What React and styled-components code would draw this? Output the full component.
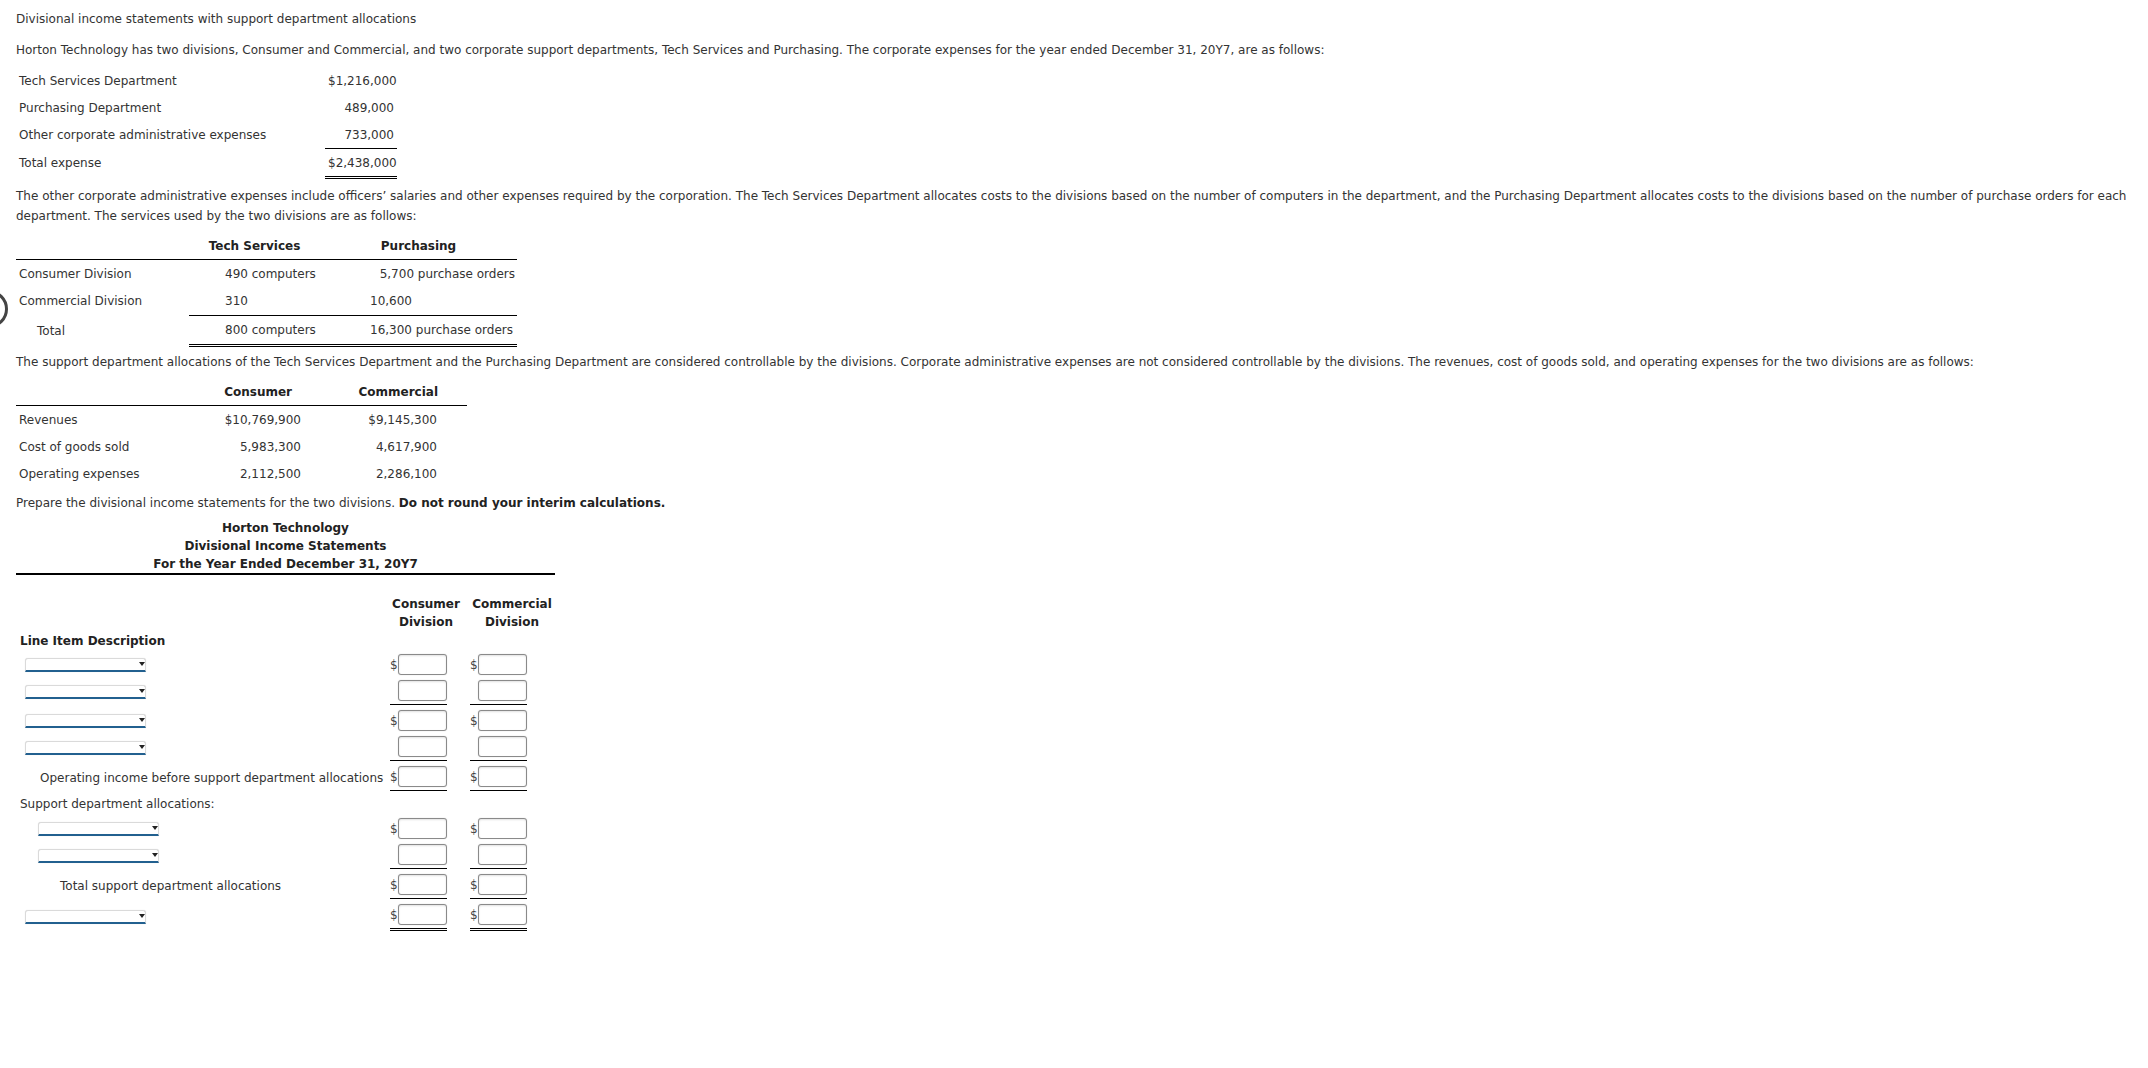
import styled, { createGlobalStyle } from "styled-components";

const GlobalStyle = createGlobalStyle`
  html, body {
    margin: 0;
    padding: 0;
    background: #fff;
  }
  body {
    font-family: "DejaVu Sans", Verdana, sans-serif;
    font-size: 12px;
    color: #333;
  }
`;

const expenses = [
  { label: "Tech Services Department", amount: "$1,216,000" },
  { label: "Purchasing Department", amount: "489,000" },
  { label: "Other corporate administrative expenses", amount: "733,000", rule: "single" },
  { label: "Total expense", amount: "$2,438,000", rule: "double" },
];

const divisions = [
  { label: "Revenues", consumer: "$10,769,900", commercial: "$9,145,300" },
  { label: "Cost of goods sold", consumer: "5,983,300", commercial: "4,617,900" },
  { label: "Operating expenses", consumer: "2,112,500", commercial: "2,286,100" },
];

const answerRows = [
  { kind: "select", level: 0, dollar: true },
  { kind: "select", level: 0, line: "single" },
  { kind: "select", level: 0, dollar: true },
  { kind: "select", level: 0, line: "single" },
  { kind: "text", level: 1, dollar: true, line: "single", text: "Operating income before support department allocations" },
  { kind: "heading", text: "Support department allocations:" },
  { kind: "select", level: 1, dollar: true },
  { kind: "select", level: 1, line: "single" },
  { kind: "text", level: 2, dollar: true, line: "single", text: "Total support department allocations" },
  { kind: "select", level: 0, dollar: true, line: "double" },
];

const ruleStyle = (rule) =>
  rule === "single" ? "1px solid #000" : rule === "double" ? "3px double #000" : "none";

export default function App() {
  return (
    <>
      <GlobalStyle />
      <Page>
        <EdgeCircle />
        <Text>Divisional income statements with support department allocations</Text>
        <Text $mt={11}>
          Horton Technology has two divisions, Consumer and Commercial, and two corporate support
          departments, Tech Services and Purchasing. The corporate expenses for the year ended
          December 31, 20Y7, are as follows:
        </Text>

        <Table $mt={7} $w={381}>
          <colgroup>
            <Col $w={309} />
            <Col $w={72} />
          </colgroup>
          <tbody>
            {expenses.map((row) => (
              <tr key={row.label}>
                <Cell>{row.label}</Cell>
                <Cell $align="right" $rule={row.rule}>
                  {row.amount}
                </Cell>
              </tr>
            ))}
          </tbody>
        </Table>

        <Text $mt={7}>
          The other corporate administrative expenses include officers’ salaries and other expenses
          required by the corporation. The Tech Services Department allocates costs to the divisions
          based on the number of computers in the department, and the Purchasing Department allocates
          costs to the divisions based on the number of purchase orders for each department. The
          services used by the two divisions are as follows:
        </Text>

        <Table $mt={6} $w={501}>
          <colgroup>
            <Col $w={173} />
            <Col $w={131} />
            <Col $w={197} />
          </colgroup>
          <thead>
            <tr>
              <HeadCell $rule="single" />
              <HeadCell $rule="single" $align="center">Tech Services</HeadCell>
              <HeadCell $rule="single" $align="center">Purchasing</HeadCell>
            </tr>
          </thead>
          <tbody>
            <tr>
              <Cell>Consumer Division</Cell>
              <Cell $pl={36}>490 computers</Cell>
              <Cell $align="right" $pr={2}>5,700 purchase orders</Cell>
            </tr>
            <tr>
              <Cell $h={28}>Commercial Division</Cell>
              <Cell $h={28} $pl={36} $rule="single">310</Cell>
              <Cell $h={28} $pl={50} $rule="single">10,600</Cell>
            </tr>
            <tr>
              <Cell $h={28} $pl={21}>Total</Cell>
              <Cell $h={28} $pl={36} $rule="double">800 computers</Cell>
              <Cell $h={28} $pl={50} $rule="double">16,300 purchase orders</Cell>
            </tr>
          </tbody>
        </Table>

        <Text $mt={5}>
          The support department allocations of the Tech Services Department and the Purchasing
          Department are considered controllable by the divisions. Corporate administrative expenses
          are not considered controllable by the divisions. The revenues, cost of goods sold, and
          operating expenses for the two divisions are as follows:
        </Text>

        <Table $mt={6} $w={451}>
          <colgroup>
            <Col $w={197} />
            <Col $w={90} />
            <Col $w={164} />
          </colgroup>
          <thead>
            <tr>
              <HeadCell $rule="single" />
              <HeadCell $rule="single" $align="right" $pr={11}>Consumer</HeadCell>
              <HeadCell $rule="single" $align="right" $pr={29}>Commercial</HeadCell>
            </tr>
          </thead>
          <tbody>
            {divisions.map((row) => (
              <tr key={row.label}>
                <Cell>{row.label}</Cell>
                <Cell $align="right" $pr={2}>{row.consumer}</Cell>
                <Cell $align="right" $pr={30}>{row.commercial}</Cell>
              </tr>
            ))}
          </tbody>
        </Table>

        <Text $mt={6}>
          Prepare the divisional income statements for the two divisions.{" "}
          <Strong>Do not round your interim calculations.</Strong>
        </Text>

        <StatementTitle>
          <div>Horton Technology</div>
          <div>Divisional Income Statements</div>
          <div>For the Year Ended December 31, 20Y7</div>
        </StatementTitle>

        <AnswerHead>
          <span />
          <ColumnTitle $shift={-2}>
            Consumer
            <br />
            Division
          </ColumnTitle>
          <ColumnTitle $shift={4}>
            Commercial
            <br />
            Division
          </ColumnTitle>
        </AnswerHead>
        <LineItemTitle>Line Item Description</LineItemTitle>

        <AnswerBody>
          {answerRows.map((row, i) =>
            row.kind === "heading" ? (
              <SectionLabel key={i}>{row.text}</SectionLabel>
            ) : (
              <AnswerRow key={i} $line={row.line}>
                {row.kind === "select" ? (
                  <SelectWrap $level={row.level}>
                    <Dropdown defaultValue="">
                      <option value="" />
                    </Dropdown>
                  </SelectWrap>
                ) : (
                  <RowLabel $level={row.level}>{row.text}</RowLabel>
                )}
                {[0, 1].map((c) => (
                  <AmountCell key={c} $line={row.line}>
                    <Dollar>{row.dollar ? "$" : ""}</Dollar>
                    <AmountInput type="text" />
                  </AmountCell>
                ))}
              </AnswerRow>
            )
          )}
        </AnswerBody>
      </Page>
    </>
  );
}

const Page = styled.main`
  position: relative;
  box-sizing: border-box;
  min-height: 1068px;
  padding: 9px 16px 40px;
`;

const EdgeCircle = styled.div`
  position: absolute;
  left: -30px;
  top: 290px;
  width: 32px;
  height: 32px;
  border: 3px solid #444;
  border-radius: 50%;
`;

const Text = styled.p`
  margin: ${(p) => p.$mt ?? 0}px 0 0;
  line-height: 20px;
`;

const Strong = styled.b`
  font-weight: bold;
  color: #222;
`;

const Table = styled.table`
  margin-top: ${(p) => p.$mt}px;
  width: ${(p) => p.$w}px;
  border-collapse: collapse;
  table-layout: fixed;
`;

const Col = styled.col`
  width: ${(p) => p.$w}px;
`;

const Cell = styled.td`
  height: ${(p) => p.$h ?? 27}px;
  padding: 0 ${(p) => p.$pr ?? 3}px 0 ${(p) => p.$pl ?? 3}px;
  line-height: 20px;
  text-align: ${(p) => p.$align ?? "left"};
  vertical-align: middle;
  white-space: nowrap;
  border-bottom: ${(p) => ruleStyle(p.$rule)};
`;

const HeadCell = styled(Cell).attrs({ as: "th" })`
  font-weight: bold;
  color: #222;
`;

const StatementTitle = styled.div`
  width: 539px;
  margin-top: 6px;
  border-bottom: 2px solid #000;
  font-weight: bold;
  color: #222;
  line-height: 18px;
  text-align: center;
`;

const AnswerGrid = styled.div`
  display: grid;
  grid-template-columns: 372px 80px 80px;
  align-items: center;
`;

const AnswerHead = styled(AnswerGrid)`
  margin-top: 20px;
`;

const ColumnTitle = styled.div`
  position: relative;
  left: ${(p) => p.$shift ?? 0}px;
  font-weight: bold;
  color: #222;
  line-height: 18px;
  text-align: center;
  white-space: nowrap;
`;

const LineItemTitle = styled.div`
  margin-top: 1px;
  padding-left: 4px;
  font-weight: bold;
  color: #222;
  line-height: 18px;
`;

const AnswerBody = styled.div`
  margin-top: 2px;
`;

const AnswerRow = styled(AnswerGrid)`
  padding-bottom: ${(p) => (p.$line ? 3 : 0)}px;
`;

const SectionLabel = styled.div`
  padding: 0 0 2px 4px;
  line-height: 20px;
`;

const RowLabel = styled.div`
  padding-left: ${(p) => 4 + p.$level * 20}px;
  line-height: 20px;
  white-space: nowrap;
`;

const SelectWrap = styled.div`
  position: relative;
  width: 121px;
  margin-left: ${(p) => 9 + p.$level * 13}px;

  &::after {
    content: "";
    position: absolute;
    right: 1px;
    top: 4px;
    border-left: 3.5px solid transparent;
    border-right: 3.5px solid transparent;
    border-top: 4px solid #222;
    pointer-events: none;
  }
`;

const Dropdown = styled.select`
  appearance: none;
  display: block;
  box-sizing: border-box;
  width: 100%;
  height: 14px;
  margin: 0;
  padding: 0;
  border: 1px solid #dadada;
  border-bottom: 2px solid #22608f;
  border-radius: 3px 3px 0 0;
  box-shadow: 0 0 1px rgba(0, 0, 0, 0.15);
  background: #fff;
  font: inherit;
`;

const AmountCell = styled.div`
  display: flex;
  align-items: center;
  width: 57px;
  margin-left: 2px;
  padding: 2px 0 3px;
  border-bottom: ${(p) => ruleStyle(p.$line)};
`;

const Dollar = styled.span`
  width: 8px;
  line-height: 20px;
  color: #444;
`;

const AmountInput = styled.input`
  box-sizing: border-box;
  width: 49px;
  height: 21px;
  margin: 0;
  padding: 0 3px;
  border: 1px solid #8a8a8a;
  border-radius: 3px;
  box-shadow: inset 0 1px 2px rgba(0, 0, 0, 0.12), 0 0 1px rgba(0, 0, 0, 0.25);
  background: #fff;
  font: inherit;
`;
